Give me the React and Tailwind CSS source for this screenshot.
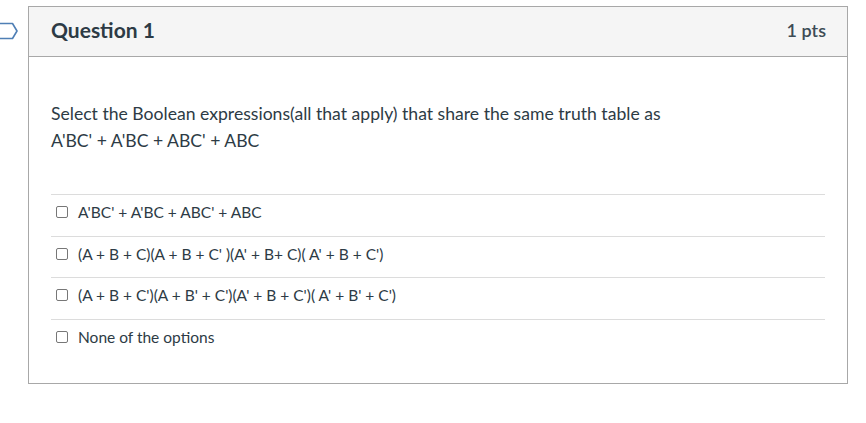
import React from 'react';

const answers = [
  "A'BC' + A'BC + ABC' + ABC",
  "(A + B + C)(A + B + C' )(A' + B+ C)( A' + B + C')",
  "(A + B + C')(A + B' + C')(A' + B + C')( A' + B' + C')",
  'None of the options',
];

const FlagIcon = () => (
  <svg width="20" height="18" viewBox="0 0 20 18" className="absolute left-0 top-[22px]">
    <path d="M-4 1.5 H12.5 L17 9 L12.5 16.5 H-4" fill="none" stroke="#4f7fb5" strokeWidth="1.6" strokeLinejoin="round" />
  </svg>
);

export default function App() {
  return (
    <div className="relative min-h-[423px] bg-white pt-[6px] font-['Lato','Open_Sans',sans-serif] text-[#2d3b45]">
      <FlagIcon />
      <div className="ml-[28px] w-[820px] border border-[#a8a8a8]">
        <div className="flex h-[50px] items-center justify-between border-b border-[#a8a8a8] bg-[#f5f5f5] pb-[3px] pl-[22px] pr-[21px]">
          <h2 className="text-[21px] font-bold">Question 1</h2>
          <span className="text-[18px] font-semibold text-[#3d4b55]">1 pts</span>
        </div>
        <div className="px-[22px] pb-[23px] pt-[43px]">
          <p className="text-[17.6px] leading-[27px]">
            Select the Boolean expressions(all that apply) that share the same truth table as
            <br />
            A'BC' + A'BC + ABC' + ABC
          </p>
          <div className="mt-[40px]">
            {answers.map((a) => (
              <label key={a} className="flex h-[41.5px] items-start border-t border-[#dcdcdc] pl-[5px] pt-[7px] text-[15.5px] leading-[20px]">
                <span className="mr-[10px] mt-[4px] inline-block h-[12px] w-[12px] shrink-0 rounded-[2px] border border-[#777]" />
                {a}
              </label>
            ))}
          </div>
        </div>
      </div>
    </div>
  );
}
